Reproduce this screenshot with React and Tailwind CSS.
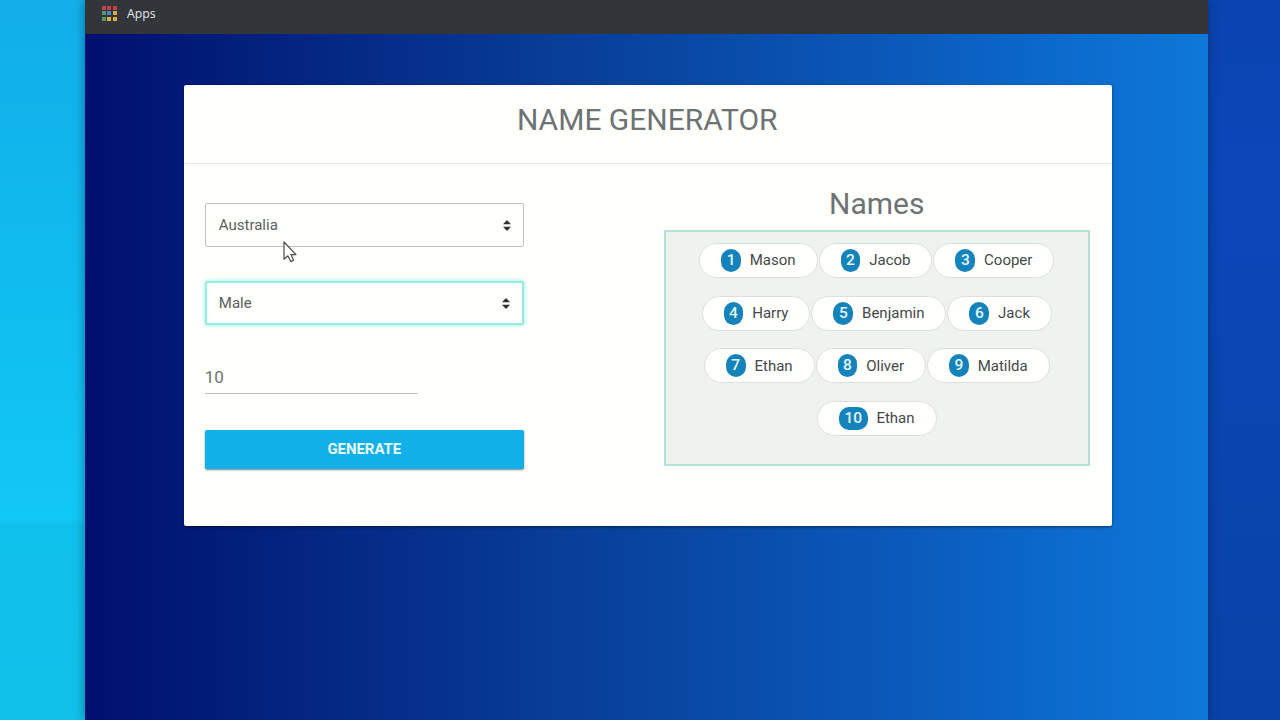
import React from 'react'

const names = [
  'Mason',
  'Jacob',
  'Cooper',
  'Harry',
  'Benjamin',
  'Jack',
  'Ethan',
  'Oliver',
  'Matilda',
  'Ethan',
]

// Colors of the 3x3 grid in the bookmarks bar
const appDots = [
  'bg-[#c0424c]',
  'bg-[#c93e4b]',
  'bg-[#c0424c]',
  'bg-[#519a6a]',
  'bg-[#4387cf]',
  'bg-[#d9a93c]',
  'bg-[#519a6a]',
  'bg-[#e0b03c]',
  'bg-[#e0b03c]',
]

const BookmarksBar = () => (
  <div className="flex h-[34px] items-start bg-[#323539] pl-[16.5px] pt-[5px]">
    <div className="mt-[0.5px] grid grid-cols-3 gap-x-[1.5px] gap-y-[1.5px]">
      {appDots.map((color, i) => (
        <span key={i} className={`h-[4px] w-[4px] ${color}`} />
      ))}
    </div>
    <span className="ml-[10px] font-['Open_Sans',sans-serif] text-[12.3px] font-medium leading-[17px] text-[#e6e7e8]">
      Apps
    </span>
  </div>
)

const Caret = ({ className }) => (
  <svg
    className={`pointer-events-none absolute top-[17px] h-[11px] w-[8px] ${className}`}
    viewBox="0 0 8 11"
    fill="#303336"
  >
    <path d="M0 4.3 3.4 0.5H4.6L8 4.3Z M0 6.7 3.4 10.5H4.6L8 6.7Z" />
  </svg>
)

const Select = ({ value, options, className, caretClassName }) => (
  <div className="relative">
    <select
      defaultValue={value}
      className={`block h-[44px] w-full appearance-none rounded-[2px] bg-[#fffffc] px-[13px] text-[15px] text-[#5a6060] outline-none ${className}`}
    >
      {options.map((option) => (
        <option key={option}>{option}</option>
      ))}
    </select>
    <Caret className={caretClassName} />
  </div>
)

const NameChip = ({ number, name }) => (
  <li className="flex h-[35px] items-center rounded-full border border-[#dde0df] bg-[#fffffd] px-[21px] text-[15px] text-[#45494a]">
    <span className="mr-[8.8px] flex h-[23px] items-center rounded-[10px] bg-[#1583bb] px-[5.5px] text-[15.5px] font-medium text-[#e2f7fb]">
      {number}
    </span>
    {name}
  </li>
)

const Cursor = () => (
  <svg
    className="pointer-events-none absolute left-[283px] top-[241px] z-20 h-[22px] w-[15px]"
    viewBox="0 0 15 22"
    fill="#fffffc"
    stroke="#4a4b4d"
    strokeWidth="1.2"
    strokeLinejoin="round"
  >
    <path d="M1 1V18.3L4.9 14.8 7.8 20.6 10.6 19.2 8 13.6H13Z" />
  </svg>
)

const App = () => {
  return (
    <div className="relative flex h-screen overflow-hidden bg-[linear-gradient(#0b44b0,#0b47bb_25%,#0a45b0_60%,#0943a8)] font-[Roboto,sans-serif]">
      <div className="w-[85.4px] shrink-0 bg-[linear-gradient(#12aeea,#10bef0_45%,#12c8f4_72%,#10c0ec_73%,#10c0e8)]" />

      <div className="z-10 flex w-[1123px] shrink-0 flex-col shadow-[0_0_10px_rgba(0,20,50,0.45)]">
        <BookmarksBar />

        <main className="flex-1 bg-[linear-gradient(to_right,#000f70,#031f7c_14%,#083d98_42%,#0b59ba_72%,#0c69cc_86%,#0e78d8)] pl-[98.4px] pt-[51px]">
          <div className="h-[441px] w-[928px] rounded-[2px] bg-[#fffffc] shadow-[0_1px_3px_rgba(0,0,0,0.5)]">
            <header className="h-[79px] border-b border-[#e2e4e3] pt-[15px] text-center">
              <h1 className="pr-px text-[30px] leading-[40px] text-[#6d7375]">NAME GENERATOR</h1>
            </header>

            <div className="flex justify-between pl-[21px] pr-[22px]">
              <form className="w-[319px] pt-[39px]">
                <Select
                  value="Australia"
                  options={['Australia', 'England', 'United States']}
                  className="border border-[#bfc2c2]"
                  caretClassName="right-[13px]"
                />
                <div className="mt-[34px]">
                  <Select
                    value="Male"
                    options={['Male', 'Female']}
                    className="border-2 border-[#96ecdf] pl-[12px] shadow-[0_0_4px_#7df0e2]"
                    caretClassName="right-[14px]"
                  />
                </div>
                <input
                  type="text"
                  defaultValue="10"
                  className="mt-[36px] block h-[33px] w-[213px] border-b border-[#bcc0c0] text-[17px] text-[#6d7375] outline-none"
                />
                <button
                  type="button"
                  className="mt-[36px] block h-[39px] w-full rounded-[2px] bg-[#12b0e8] text-[15px] font-bold tracking-[-0.05px] text-[#e8fbff] shadow-[0_1px_2px_rgba(0,0,0,0.5)]"
                >
                  GENERATE
                </button>
              </form>

              <section className="w-[426px] pt-[20px]">
                <h2 className="text-center text-[30px] leading-[40px] text-[#6d7375]">Names</h2>
                <ul className="mt-[6px] flex h-[236px] flex-wrap content-start justify-center gap-x-[1px] gap-y-[17.7px] border-2 border-[#b4e0da] bg-[#eff3f0] pt-[11px]">
                  {names.map((name, i) => (
                    <NameChip key={i} number={i + 1} name={name} />
                  ))}
                </ul>
              </section>
            </div>
          </div>
        </main>
      </div>

      <Cursor />
    </div>
  )
}

export default App
